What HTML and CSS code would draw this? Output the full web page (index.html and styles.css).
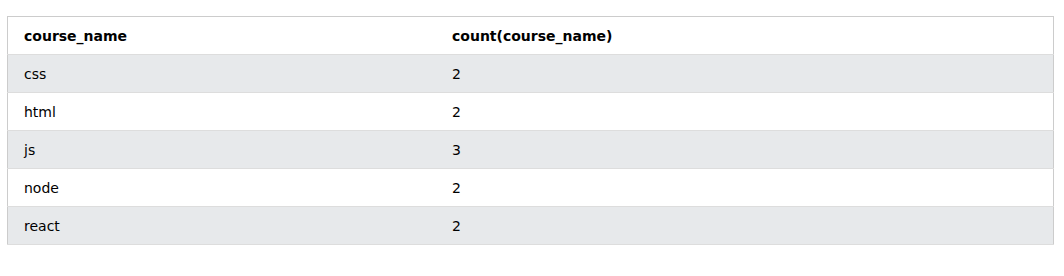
FILE: index.html
```html
<!DOCTYPE html>
<html>
<head>
<meta charset="utf-8">
<link rel="stylesheet" href="styles.css">
</head>
<body>
<div class="wrap">
<table class="result">
<tr><th>course_name</th><th>count(course_name)</th></tr>
<tr><td>css</td><td>2</td></tr>
<tr><td>html</td><td>2</td></tr>
<tr><td>js</td><td>3</td></tr>
<tr><td>node</td><td>2</td></tr>
<tr><td>react</td><td>2</td></tr>
</table>
</div>
</body>
</html>
```
FILE: styles.css
```css
html, body { margin: 0; padding: 0; background: #fff; }
body { font-family: "DejaVu Sans", Verdana, sans-serif; font-size: 14px; color: #000; }
.wrap { padding: 16px 10px 0 7px; }
.result { width: 100%; border-collapse: collapse; border: 1px solid #ccc; }
.result th, .result td {
  text-align: left; padding: 9px 8px 7px; line-height: 21px; border-bottom: 1px solid #ddd;
  vertical-align: top;
}
.result th { font-weight: bold; }
.result th:first-child, .result td:first-child { padding-left: 16px; width: 412px; }
.result tr:nth-child(even) { background: #e7e9eb; }
```
